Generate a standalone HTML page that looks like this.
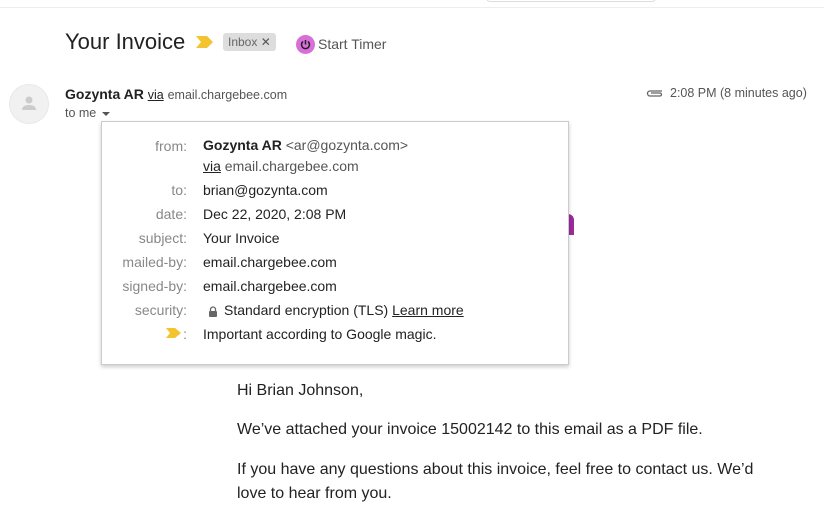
<!DOCTYPE html>
<html><head><style>
*{margin:0;padding:0;box-sizing:border-box}
body{width:824px;height:528px;overflow:hidden;background:#fff;font-family:"Liberation Sans",Arial,sans-serif;position:relative;color:#222}
.a{position:absolute;white-space:nowrap}
.lab{position:absolute;right:381px;color:#888;font-size:14px;white-space:nowrap}
.val{position:absolute;left:101px;font-size:14px;color:#222;white-space:nowrap}
</style></head><body>
<div class="a" style="left:486px;top:-6px;width:170px;height:8px;border:1px solid #ddd;border-radius:4px"></div>
<div class="a" style="left:0;top:7px;width:824px;height:1px;background:#eee"></div>
<div class="a" style="left:65px;top:29px;font-size:22px;color:#222">Your Invoice</div>
<svg class="a" style="left:196px;top:36px" width="18" height="12"><path d="M0 0H11L17 6L11 12H0L5 6Z" fill="#f4c430"/></svg>
<div class="a" style="left:223px;top:33px;height:18px;padding:0 5px;background:#ddd;border-radius:3px;font-size:12px;line-height:18px;color:#666">Inbox <span style="color:#555">✕</span></div>
<svg class="a" style="left:296px;top:35px" width="19" height="19"><circle cx="9.5" cy="9.5" r="9.5" fill="#d86fd8"/><path d="M7 6.5A4 4 0 1 0 12 6.5M9.5 5V9.5" stroke="#222" stroke-width="1.5" fill="none"/></svg>
<div class="a" style="left:318px;top:36px;font-size:14px;color:#555">Start Timer</div>
<div class="a" style="left:9px;top:84px;width:40px;height:40px;border-radius:50%;background:#f1f1f1;border:1px solid #e8e8e8"></div>
<svg class="a" style="left:19px;top:94px" width="20" height="20"><circle cx="10" cy="6" r="3.5" fill="#ccc"/><path d="M3 16Q3 11 10 11Q17 11 17 16Z" fill="#ccc"/></svg>
<div class="a" style="left:65px;top:86px;font-size:14px"><b>Gozynta AR</b> <span style="font-size:12.5px;color:#222;text-decoration:underline">via</span> <span style="font-size:12.5px;color:#555">email.chargebee.com</span></div>
<div class="a" style="left:65px;top:106px;font-size:12.5px;color:#555">to me</div>
<div class="a" style="left:102px;top:112px;width:0;height:0;border-left:4px solid transparent;border-right:4px solid transparent;border-top:4px solid #555"></div>
<svg class="a" style="left:646px;top:87px" width="18" height="12"><path d="M16 4H4A2.5 2.5 0 0 0 4 9H14A1.5 1.5 0 0 0 14 6H5" stroke="#666" stroke-width="1.3" fill="none"/></svg>
<div class="a" style="left:670px;top:86px;font-size:12.5px;color:#555">2:08 PM (8 minutes ago)</div>
<div class="a" style="left:568px;top:214px;width:6px;height:21px;background:#9c2a9c;border-radius:0 6px 0 0"></div>
<div class="a" style="left:101px;top:121px;width:468px;height:244px;border:1px solid #ccc;background:#fff;box-shadow:0 2px 4px rgba(0,0,0,.2)">
<div class="lab" style="top:16px">from:</div><div class="val" style="top:15px"><b>Gozynta AR</b> <span style="color:#555">&lt;ar@gozynta.com&gt;</span></div>
<div class="val" style="top:36px;color:#555"><span style="text-decoration:underline;color:#222">via</span> email.chargebee.com</div>
<div class="lab" style="top:60px">to:</div><div class="val" style="top:60px">brian@gozynta.com</div>
<div class="lab" style="top:84px">date:</div><div class="val" style="top:84px">Dec 22, 2020, 2:08 PM</div>
<div class="lab" style="top:108px">subject:</div><div class="val" style="top:108px">Your Invoice</div>
<div class="lab" style="top:132px">mailed-by:</div><div class="val" style="top:132px">email.chargebee.com</div>
<div class="lab" style="top:156px">signed-by:</div><div class="val" style="top:156px">email.chargebee.com</div>
<div class="lab" style="top:180px">security:</div>
<svg class="a" style="left:106px;top:184px" width="10" height="11"><path d="M2.5 5V3.5A2.5 2.5 0 0 1 7.5 3.5V5" stroke="#666" stroke-width="1.3" fill="none"/><rect x="1" y="5" width="8" height="6" rx="1" fill="#666"/></svg>
<div class="val" style="top:180px;left:122px">Standard encryption (TLS) <span style="text-decoration:underline">Learn more</span></div>
<svg class="a" style="left:64px;top:206px" width="16" height="10"><path d="M0 0H9L15 5L9 10H0L4 5Z" fill="#f4c430"/></svg>
<div class="lab" style="top:204px">:</div>
<div class="val" style="top:204px">Important according to Google magic.</div>
</div>
<div class="a" style="left:237px;top:382px;font-size:16px;color:#222">Hi Brian Johnson,</div>
<div class="a" style="left:237px;top:421px;font-size:16px;color:#222">We’ve attached your invoice 15002142 to this email as a PDF file.</div>
<div class="a" style="left:237px;top:458px;font-size:16px;color:#222;line-height:24px">If you have any questions about this invoice, feel free to contact us. We’d<br>love to hear from you.</div>
</body></html>
